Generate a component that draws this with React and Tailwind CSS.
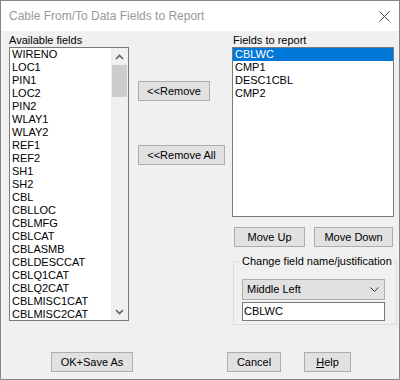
import React from 'react';

const available = [
    'WIRENO', 'LOC1', 'PIN1', 'LOC2', 'PIN2', 'WLAY1', 'WLAY2', 'REF1', 'REF2',
    'SH1', 'SH2', 'CBL', 'CBLLOC', 'CBLMFG', 'CBLCAT', 'CBLASMB', 'CBLDESCCAT',
    'CBLQ1CAT', 'CBLQ2CAT', 'CBLMISC1CAT', 'CBLMISC2CAT',
];

const reported = ['CBLWC', 'CMP1', 'DESC1CBL', 'CMP2'];

const font = { fontFamily: '"Liberation Sans", Arial, sans-serif' };

const Button = ({ className = '', children }) => (
    <button
        className={`h-[20px] bg-[#e1e1e1] border border-[#adadad] text-[11px] leading-[18px] text-black text-center ${className}`}
    >
        {children}
    </button>
);

const Chevron = ({ up }) => (
    <svg width="9" height="6" viewBox="0 0 9 6">
        <path
            d={up ? 'M1 5 L4.5 1.5 L8 5' : 'M1 1 L4.5 4.5 L8 1'}
            fill="none"
            stroke="#606060"
            strokeWidth="1.6"
        />
    </svg>
);

const App = () => {
    return (
        <div className="w-[400px] h-[380px] border border-[#858585] flex flex-col bg-[#f0f0f0] overflow-hidden" style={font}>
            {/* Title bar */}
            <div className="h-[30px] shrink-0 bg-white flex items-center justify-between pl-[8px] pr-[9px]">
                <span className="text-[12px] leading-[16px] text-[#999999]">Cable From/To Data Fields to Report</span>
                <svg width="11" height="11" viewBox="0 0 11 11">
                    <path d="M0.5 0.5 L10.5 10.5 M10.5 0.5 L0.5 10.5" stroke="#4d4d4d" strokeWidth="1" fill="none" />
                </svg>
            </div>

            <div className="flex-1 flex flex-col pt-[3px]">
                <div className="flex items-start pl-[8px]">
                    {/* Available fields */}
                    <div className="w-[120px] flex flex-col">
                        <div className="h-[13px] text-[11px] leading-[13px] text-black">Available fields</div>
                        <div className="h-[274px] bg-white border border-[#7a7a7a] flex">
                            <div className="flex-1 flex flex-col pl-[2px] overflow-hidden">
                                {available.map((f) => (
                                    <div key={f} className="h-[13px] shrink-0 text-[11px] leading-[13px] text-black">{f}</div>
                                ))}
                            </div>
                            <div className="w-[17px] bg-[#f0f0f0] flex flex-col items-center">
                                <div className="h-[17px] flex items-center justify-center"><Chevron up /></div>
                                <div className="w-[15px] h-[32px] bg-[#cdcdcd]" />
                                <div className="flex-1" />
                                <div className="h-[17px] flex items-center justify-center"><Chevron /></div>
                            </div>
                        </div>
                    </div>

                    {/* Remove buttons */}
                    <div className="ml-[9px] w-[87px] flex flex-col items-start pt-[47px]">
                        <Button className="w-[72px]">&lt;&lt;Remove</Button>
                        <Button className="w-[87px] mt-[44px]">&lt;&lt;Remove All</Button>
                    </div>

                    {/* Fields to report */}
                    <div className="ml-[7px] w-[165px] flex flex-col">
                        <div className="h-[13px] text-[11px] leading-[13px] text-black pl-[1px]">Fields to report</div>
                        <div className="w-[162px] h-[170px] bg-white border border-[#7a7a7a] flex flex-col">
                            {reported.map((f, i) => (
                                <div
                                    key={f}
                                    className={`h-[13px] text-[11px] leading-[13px] pl-[2px] ${i === 0 ? 'bg-[#0078d7] text-white' : 'text-black'}`}
                                >
                                    {f}
                                </div>
                            ))}
                        </div>
                        <div className="flex mt-[10px] pl-[2px]">
                            <Button className="w-[71px]">Move Up</Button>
                            <Button className="w-[79px] ml-[9px]">Move Down</Button>
                        </div>
                        <fieldset className="ml-[1px] mt-[8px] w-[164px] border border-[#dcdcdc] pl-[8px] pb-[3px]">
                            <legend className="ml-[-2px] px-[2px] text-[11px] leading-[12px] text-black">Change field name/justification</legend>
                            <div className="mt-[12px] w-[143px] h-[21px] bg-[#e1e1e1] border border-[#adadad] flex items-center justify-between pl-[4px] pr-[5px]">
                                <span className="text-[11px] leading-[13px] text-black">Middle Left</span>
                                <svg width="9" height="5" viewBox="0 0 9 5">
                                    <path d="M0.5 0.5 L4.5 4.5 L8.5 0.5" fill="none" stroke="#333333" strokeWidth="1" />
                                </svg>
                            </div>
                            <div className="mt-[2px] w-[143px] h-[19px] bg-white border border-[#7a7a7a] flex items-center pl-[1px]">
                                <span className="text-[11px] leading-[13px] text-black">CBLWC</span>
                            </div>
                        </fieldset>
                    </div>
                </div>

                {/* Bottom buttons */}
                <div className="flex mt-[27px] pl-[50px]">
                    <Button className="w-[82px]">OK+Save As</Button>
                    <Button className="w-[54px] ml-[94px]">Cancel</Button>
                    <Button className="w-[47px] ml-[23px]"><span className="underline">H</span>elp</Button>
                </div>
            </div>
        </div>
    );
};

export default App;
